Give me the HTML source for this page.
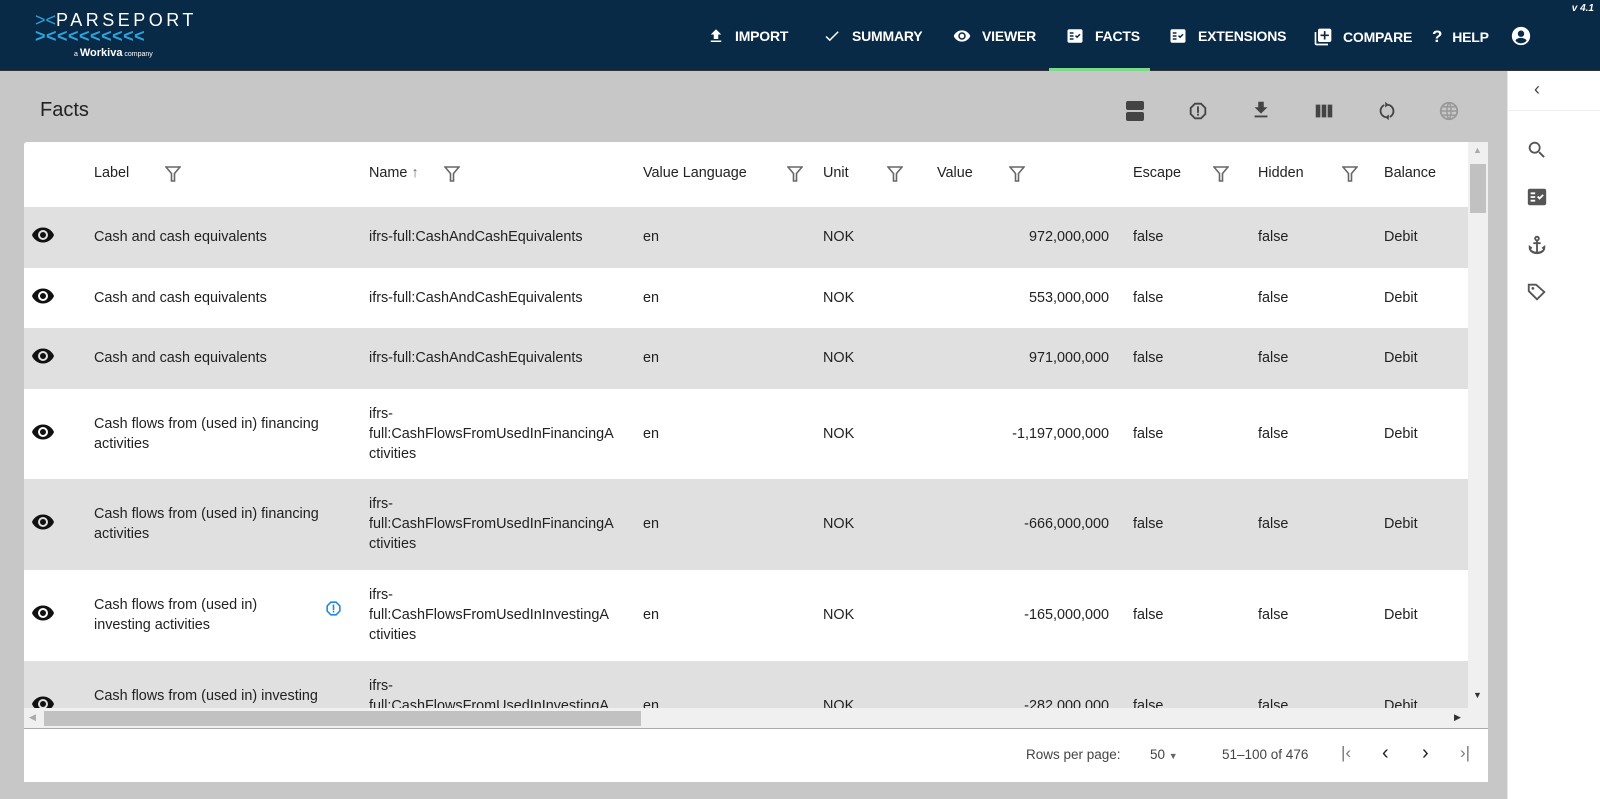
<!DOCTYPE html>
<html><head><meta charset="utf-8"><style>
*{box-sizing:border-box;margin:0;padding:0}
body{width:1600px;height:799px;overflow:hidden;background:#c6c7c6;font-family:"Liberation Sans",sans-serif;color:#222;position:relative}
.hdr{position:absolute;left:0;top:0;width:1600px;height:71px;background:#082a46;border-bottom:1px solid #333}
.nav{position:absolute;top:27px;color:#fff;font-size:14px;font-weight:bold;display:flex;align-items:center;gap:10px;letter-spacing:-0.2px}
.side{position:absolute;left:1507px;top:71px;width:93px;height:728px;background:#fff;border-left:1px solid #e6e6e6}
.card{position:absolute;left:24px;top:142px;width:1464px;height:640px;background:#fff;border-radius:3px;overflow:hidden}
.th{position:absolute;top:165px;font-size:14.4px;color:#222}
.row{position:absolute;left:24px;width:1444px}
.row.g{background:#e0e0e0}
.c{position:absolute;font-size:14.4px;line-height:20px;color:#222}
.flt{position:absolute;top:166px}
</style></head><body>
<div class="hdr">
 <div style="position:absolute;left:35px;top:10px;color:#fff;font-size:18px;letter-spacing:3.5px"><span style="color:#2fa3dc;letter-spacing:0">&gt;&lt;</span>PARSEPORT</div>
 <div style="position:absolute;left:35px;top:26px;color:#2fa3dc;font-size:18px;letter-spacing:0.5px;font-weight:bold">&gt;&lt;&lt;&lt;&lt;&lt;&lt;&lt;&lt;&lt;</div>
 <div style="position:absolute;left:74px;top:47px;color:#fff;font-size:7px">a <b style="font-size:11px">Workiva</b> company</div>
 <div style="position:absolute;right:6px;top:3px;color:#fff;font-size:10px;font-style:italic;font-weight:bold">v 4.1</div>
 <div class="nav" style="left:707px"><svg width="18" height="18" viewBox="0 0 24 24"><path fill="#fff" d="M9 16h6v-6h4l-7-7-7 7h4zm-4 2h14v2H5z"/></svg>IMPORT</div>
 <div class="nav" style="left:822px"><svg width="20" height="18" viewBox="0 0 24 24"><path fill="#fff" d="M9 16.2 4.8 12l-1.4 1.4L9 19 21 7l-1.4-1.4z"/></svg>SUMMARY</div>
 <div class="nav" style="left:952px"><svg width="20" height="18" viewBox="0 0 24 24"><path fill="#fff" d="M12 4.5C7 4.5 2.7 7.6 1 12c1.7 4.4 6 7.5 11 7.5s9.3-3.1 11-7.5c-1.7-4.4-6-7.5-11-7.5zM12 17a5 5 0 1 1 0-10 5 5 0 0 1 0 10zm0-8a3 3 0 1 0 0 6 3 3 0 0 0 0-6z"/></svg>VIEWER</div>
 <div class="nav" style="left:1065px"><svg width="20" height="18" viewBox="0 0 24 24"><path fill="#fff" d="M20 3H4c-1.1 0-2 .9-2 2v14c0 1.1.9 2 2 2h16c1.1 0 2-.9 2-2V5c0-1.1-.9-2-2-2zM10 17H5v-2h5v2zm0-4H5v-2h5v2zm0-4H5V7h5v2zm4.8 6L12 12.2l1.4-1.4 1.4 1.4 3.2-3.2 1.4 1.4z"/></svg>FACTS</div>
 <div style="position:absolute;left:1049px;top:68px;width:101px;height:3px;background:#7ed98b"></div>
 <div class="nav" style="left:1168px"><svg width="20" height="18" viewBox="0 0 24 24"><path fill="#fff" d="M20 3H4c-1.1 0-2 .9-2 2v14c0 1.1.9 2 2 2h16c1.1 0 2-.9 2-2V5c0-1.1-.9-2-2-2zM10 17H5v-2h5v2zm0-4H5v-2h5v2zm0-4H5V7h5v2zm4.8 6L12 12.2l1.4-1.4 1.4 1.4 3.2-3.2 1.4 1.4z"/></svg>EXTENSIONS</div>
 <div class="nav" style="left:1313px"><svg width="20" height="20" viewBox="0 0 24 24"><path fill="#fff" d="M4 6H2v14c0 1.1.9 2 2 2h14v-2H4V6zm16-4H8c-1.1 0-2 .9-2 2v12c0 1.1.9 2 2 2h12c1.1 0 2-.9 2-2V4c0-1.1-.9-2-2-2zm-1 9h-4v4h-2v-4H9V9h4V5h2v4h4v2z"/></svg>COMPARE</div>
 <div class="nav" style="left:1432px"><span style="font-size:17px">?</span>HELP</div>
 <svg style="position:absolute;left:1510px;top:25px" width="22" height="22" viewBox="0 0 24 24"><path fill="#fff" d="M12 2a10 10 0 1 0 0 20 10 10 0 0 0 0-20zm0 4a3.5 3.5 0 1 1 0 7 3.5 3.5 0 0 1 0-7zm0 14a8 8 0 0 1-6-2.8c0-2 4-3.1 6-3.1s6 1.1 6 3.1A8 8 0 0 1 12 20z"/></svg>
</div>
<div style="position:absolute;left:40px;top:99px;font-size:20px;color:#222">Facts</div>
<svg style="position:absolute;left:1125px;top:100px" width="20" height="22" viewBox="0 0 20 22"><rect x="1" y="1" width="18" height="9" rx="2" fill="#444"/><rect x="1" y="12" width="18" height="9" rx="2" fill="#444"/></svg>
<svg style="position:absolute;left:1187px;top:100px" width="22" height="22" viewBox="0 0 24 24"><path fill="#444" d="M15.7 3H8.3L3 8.3v7.4L8.3 21h7.4l5.3-5.3V8.3zM19 14.9 14.9 19H9.1L5 14.9V9.1L9.1 5h5.8L19 9.1zM11 7h2v7h-2zm0 8h2v2h-2z"/></svg>
<svg style="position:absolute;left:1250px;top:99px" width="22" height="22" viewBox="0 0 24 24"><path fill="#444" d="M19 9h-4V3H9v6H5l7 7 7-7zM5 18v2h14v-2z"/></svg>
<svg style="position:absolute;left:1313px;top:100px" width="22" height="22" viewBox="0 0 24 24"><path fill="#444" d="M3 5h5v14H3zm6.5 0h5v14h-5zM16 5h5v14h-5z"/></svg>
<svg style="position:absolute;left:1376px;top:100px" width="22" height="22" viewBox="0 0 24 24"><path fill="none" stroke="#444" stroke-width="2" d="M13 5.2A7 7 0 0 1 15 18.5M11 18.8A7 7 0 0 1 9 5.5"/><path fill="#444" d="M10 2l4 3.2-4 3zM14 22l-4-3.2 4-3z"/></svg>
<svg style="position:absolute;left:1438px;top:100px" width="22" height="22" viewBox="0 0 24 24"><circle cx="12" cy="12" r="9" fill="none" stroke="#999" stroke-width="2"/><path d="M3 12h18M12 3c3 3 3 15 0 18M12 3c-3 3-3 15 0 18M5 7.5h14M5 16.5h14" fill="none" stroke="#999" stroke-width="1.6"/></svg>

<div class="side">
 <div style="position:absolute;left:0;top:0;width:93px;height:40px;border-bottom:1px solid #eee"></div>
 <div style="position:absolute;left:26px;top:8px;font-size:18px;color:#444">‹</div>
 <svg style="position:absolute;left:18px;top:68px" width="22" height="22" viewBox="0 0 24 24"><path fill="#555" d="M15.5 14h-.8l-.3-.3A6.5 6.5 0 1 0 9.5 16a6.5 6.5 0 0 0 4.2-1.6l.3.3v.8l5 5 1.5-1.5-5-5zm-6 0a4.5 4.5 0 1 1 0-9 4.5 4.5 0 0 1 0 9z"/></svg>
 <svg style="position:absolute;left:18px;top:115px" width="22" height="22" viewBox="0 0 24 24"><path fill="#555" d="M20 3H4c-1.1 0-2 .9-2 2v14c0 1.1.9 2 2 2h16c1.1 0 2-.9 2-2V5c0-1.1-.9-2-2-2zM10 17H5v-2h5v2zm0-4H5v-2h5v2zm0-4H5V7h5v2zm4.8 6L12 12.2l1.4-1.4 1.4 1.4 3.2-3.2 1.4 1.4z"/></svg>
 <svg style="position:absolute;left:18px;top:163px" width="22" height="22" viewBox="0 0 24 24"><path fill="#555" d="M17 15l1.6 1.6C17.5 18 15.5 19 13 19.3V11h3V9h-3V7.8A3 3 0 1 0 11 7.8V9H8v2h3v8.3C8.5 19 6.5 18 5.4 16.6L7 15l-4-3v3c0 3.9 4 7 9 7s9-3.1 9-7v-3l-4 3zM12 4a1 1 0 1 1 0 2 1 1 0 0 1 0-2z"/></svg>
 <svg style="position:absolute;left:18px;top:210px" width="22" height="22" viewBox="0 0 24 24"><path fill="none" stroke="#555" stroke-width="2" d="M3 4v7l9 9 8-8-9-8z"/><circle cx="7.5" cy="8" r="1.5" fill="#555"/></svg>
</div>

<div class="card"></div>
<div class="th" style="left:94px">Label</div>
<div class="th" style="left:369px">Name <span style="color:#666">↑</span></div>
<div class="th" style="left:643px">Value Language</div>
<div class="th" style="left:823px">Unit</div>
<div class="th" style="left:937px">Value</div>
<div class="th" style="left:1133px">Escape</div>
<div class="th" style="left:1258px">Hidden</div>
<div class="th" style="left:1384px">Balance</div>
<svg class="flt" style="left:165px" width="16" height="16" viewBox="0 0 16 16"><path d="M1 1h14l-5.5 6.5V15h-3V7.5z" fill="none" stroke="#666" stroke-width="1.6"/></svg>
<svg class="flt" style="left:444px" width="16" height="16" viewBox="0 0 16 16"><path d="M1 1h14l-5.5 6.5V15h-3V7.5z" fill="none" stroke="#666" stroke-width="1.6"/></svg>
<svg class="flt" style="left:787px" width="16" height="16" viewBox="0 0 16 16"><path d="M1 1h14l-5.5 6.5V15h-3V7.5z" fill="none" stroke="#666" stroke-width="1.6"/></svg>
<svg class="flt" style="left:887px" width="16" height="16" viewBox="0 0 16 16"><path d="M1 1h14l-5.5 6.5V15h-3V7.5z" fill="none" stroke="#666" stroke-width="1.6"/></svg>
<svg class="flt" style="left:1009px" width="16" height="16" viewBox="0 0 16 16"><path d="M1 1h14l-5.5 6.5V15h-3V7.5z" fill="none" stroke="#666" stroke-width="1.6"/></svg>
<svg class="flt" style="left:1213px" width="16" height="16" viewBox="0 0 16 16"><path d="M1 1h14l-5.5 6.5V15h-3V7.5z" fill="none" stroke="#666" stroke-width="1.6"/></svg>
<svg class="flt" style="left:1342px" width="16" height="16" viewBox="0 0 16 16"><path d="M1 1h14l-5.5 6.5V15h-3V7.5z" fill="none" stroke="#666" stroke-width="1.6"/></svg>

<div class="row g" style="top:207px;height:61px"></div>
<div class="row g" style="top:328px;height:61px"></div>
<div class="row g" style="top:479px;height:91px"></div>
<div class="row g" style="top:661px;height:47px"></div>

<div id="rows" style="position:absolute;left:0;top:0;width:1600px;height:708px;overflow:hidden"></div>
<script>
var eye='<svg width="22" height="16" viewBox="1 4 22 16"><path fill="#111" d="M12 4.5C7 4.5 2.7 7.6 1 12c1.7 4.4 6 7.5 11 7.5s9.3-3.1 11-7.5c-1.7-4.4-6-7.5-11-7.5zM12 17a5 5 0 1 1 0-10 5 5 0 0 1 0 10zm0-8a3 3 0 1 0 0 6 3 3 0 0 0 0-6z"/></svg>';
var R=[[237,["Cash and cash equivalents"],["ifrs-full:CashAndCashEquivalents"],"972,000,000"],
[298,["Cash and cash equivalents"],["ifrs-full:CashAndCashEquivalents"],"553,000,000"],
[358,["Cash and cash equivalents"],["ifrs-full:CashAndCashEquivalents"],"971,000,000"],
[434,["Cash flows from (used in) financing","activities"],["ifrs-","full:CashFlowsFromUsedInFinancingA","ctivities"],"-1,197,000,000"],
[524,["Cash flows from (used in) financing","activities"],["ifrs-","full:CashFlowsFromUsedInFinancingA","ctivities"],"-666,000,000"],
[615,["Cash flows from (used in)","investing activities"],["ifrs-","full:CashFlowsFromUsedInInvestingA","ctivities"],"-165,000,000"],
[706,["Cash flows from (used in) investing","activities"],["ifrs-","full:CashFlowsFromUsedInInvestingA","ctivities"],"-282,000,000"]];
var h='';
R.forEach(function(r,i){var y=r[0];
function blk(x,lines){return '<div class="c" style="left:'+x+'px;top:'+(y-10*lines.length)+'px">'+lines.join('<br>')+'</div>';}
h+='<div class="c" style="left:32px;top:'+(y-10)+'px">'+eye+'</div>';
h+=blk(94,r[1]);h+=blk(369,r[2]);
h+='<div class="c" style="left:643px;top:'+(y-10)+'px">en</div><div class="c" style="left:823px;top:'+(y-10)+'px">NOK</div>';
h+='<div class="c" style="left:900px;width:209px;text-align:right;top:'+(y-10)+'px">'+r[3]+'</div>';
h+='<div class="c" style="left:1133px;top:'+(y-10)+'px">false</div><div class="c" style="left:1258px;top:'+(y-10)+'px">false</div><div class="c" style="left:1384px;top:'+(y-10)+'px">Debit</div>';
if(i==5)h+='<svg style="position:absolute;left:324px;top:599px" width="19" height="19" viewBox="0 0 24 24"><path fill="#1e88e5" d="M15.7 3H8.3L3 8.3v7.4L8.3 21h7.4l5.3-5.3V8.3zM19 14.9 14.9 19H9.1L5 14.9V9.1L9.1 5h5.8L19 9.1zM11 7h2v7h-2zm0 8h2v2h-2z"/></svg>';
});
document.getElementById('rows').innerHTML=h;
</script>
<div style="position:absolute;left:24px;top:708px;width:1464px;height:21px;background:#f0f0f0;border-bottom:1px solid #aaa"></div>
<div style="position:absolute;left:44px;top:711px;width:597px;height:15px;background:#c1c1c1"></div>
<div style="position:absolute;left:29px;top:712px;font-size:9px;color:#aaa">◀</div>
<div style="position:absolute;left:1454px;top:712px;font-size:9px;color:#333">▶</div>
<div style="position:absolute;left:1468px;top:142px;width:20px;height:566px;background:#f0f0f0"></div>
<div style="position:absolute;left:1470px;top:164px;width:16px;height:49px;background:#c1c1c1"></div>
<div style="position:absolute;left:1473px;top:145px;font-size:9px;color:#aaa">▲</div>
<div style="position:absolute;left:1473px;top:690px;font-size:9px;color:#333">▼</div>
<div style="position:absolute;left:24px;top:729px;width:1464px;height:53px;background:#fff"></div>
<div class="c" style="left:1026px;top:745px;color:#444;font-size:13.5px">Rows per page:</div>
<div class="c" style="left:1150px;top:745px;color:#444;font-size:13.5px">50 <span style="font-size:9px;color:#666">▼</span></div>
<div class="c" style="left:1222px;top:745px;color:#444;font-size:13.5px">51–100 of 476</div>
<div class="c" style="left:1341px;top:743px;color:#777;font-size:17px">|‹</div>
<div class="c" style="left:1382px;top:743px;color:#222;font-size:20px">‹</div>
<div class="c" style="left:1422px;top:743px;color:#222;font-size:20px">›</div>
<div class="c" style="left:1460px;top:743px;color:#777;font-size:17px">›|</div>
</body></html>
